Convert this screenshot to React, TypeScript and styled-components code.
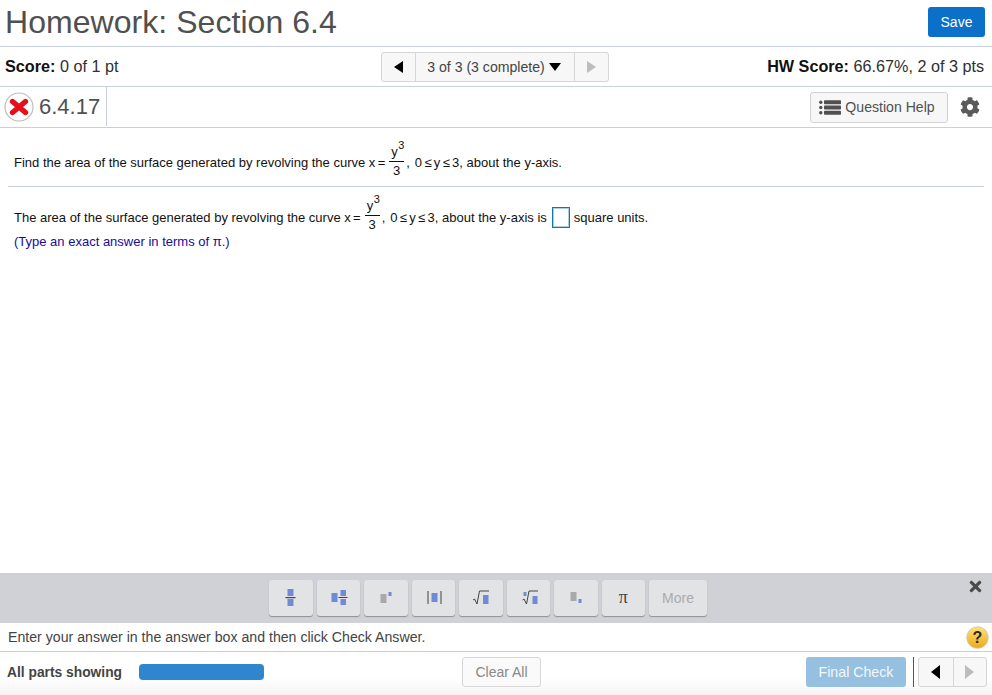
import type React from "react";
import styled, { createGlobalStyle } from "styled-components";
import { FaCog, FaTimes } from "react-icons/fa";

const GlobalStyle = createGlobalStyle`
    html, body {
        margin: 0;
        padding: 0;
        background: #fff;
        font-family: "Liberation Sans", Arial, sans-serif;
    }
    * { box-sizing: border-box; }
`;

const Page = styled.div`
    display: flex;
    flex-direction: column;
    width: 992px;
    height: 695px;
    overflow: hidden;
`;

const TitleBar = styled.header`
    display: flex;
    align-items: flex-start;
    justify-content: space-between;
    height: 47px;
    padding: 7px 7px 0 5px;
    border-bottom: 1px solid #c9cfdf;
`;

const Title = styled.h1`
    margin: -3px 0 0;
    font-size: 32px;
    line-height: 36px;
    font-weight: 400;
    color: #505050;
    letter-spacing: 0.05px;
`;

const SaveButton = styled.button`
    width: 57px;
    height: 30px;
    padding: 0;
    border: 0;
    border-radius: 3px;
    background: #0a70c8;
    color: #fff;
    font: 14px "Liberation Sans", Arial, sans-serif;
`;

const ScoreRow = styled.div`
    display: grid;
    grid-template-columns: 1fr auto 1fr;
    align-items: center;
    height: 40px;
    padding: 0 8px 0 5px;
    border-bottom: 1px solid #c9cfdf;
    font-size: 16.2px;
    color: #303030;
`;

const ScoreText = styled.div<{ $right?: boolean }>`
    text-align: ${(p) => (p.$right ? "right" : "left")};
    b { color: #111; }
`;

const ButtonGroup = styled.div<{ $width: number; $height: number }>`
    display: flex;
    width: ${(p) => p.$width}px;
    height: ${(p) => p.$height}px;
    border: 1px solid #d6d6d6;
    border-radius: 3px;
    background: #f7f7f7;
`;

const GroupCell = styled.div<{ $grow?: boolean; $split?: boolean }>`
    display: flex;
    align-items: center;
    justify-content: center;
    gap: 4px;
    flex: ${(p) => (p.$grow ? "1" : "0 0 auto")};
    width: ${(p) => (p.$grow ? "auto" : "33.5px")};
    padding-right: ${(p) => (p.$grow ? "2px" : "0")};
    border-left: ${(p) => (p.$split ? "1px solid #d6d6d6" : "0")};
    font-size: 14.1px;
    color: #444;
`;

const Triangle = styled.span<{ $dir: "left" | "right" | "down"; $muted?: boolean; $big?: boolean }>`
    display: block;
    width: 0;
    height: 0;
    ${(p) => {
        const c = p.$muted ? "#bdbdbd" : "#000";
        const h = p.$big ? 7 : 6;
        if (p.$dir === "down") return `border-left: 6.5px solid transparent; border-right: 6.5px solid transparent; border-top: 8px solid ${c};`;
        if (p.$dir === "left") return `border-top: ${h}px solid transparent; border-bottom: ${h}px solid transparent; border-right: 9px solid ${c};`;
        return `border-top: ${h}px solid transparent; border-bottom: ${h}px solid transparent; border-left: 9px solid ${c};`;
    }}
`;

const QuestionRow = styled.div`
    display: flex;
    align-items: stretch;
    justify-content: space-between;
    height: 41px;
    padding-right: 12px;
    border-bottom: 1px solid #c9cfdf;
`;

const QuestionId = styled.div`
    display: flex;
    align-items: center;
    gap: 5px;
    width: 107px;
    margin-bottom: 1px;
    padding-left: 4px;
    border-right: 1px solid #c9cfdf;
    font-size: 22px;
    color: #505050;
`;

const Tools = styled.div`
    display: flex;
    align-items: center;
    gap: 12px;
    color: #5a5a5a;
`;

const HelpButton = styled.button`
    display: flex;
    align-items: center;
    justify-content: center;
    gap: 4px;
    width: 138px;
    height: 31px;
    padding: 0 4px 0 0;
    border: 1px solid #d2d2d2;
    border-radius: 3px;
    background: #f7f7f7;
    color: #505050;
    font: 14.1px "Liberation Sans", Arial, sans-serif;
`;

const Content = styled.main`
    flex: 1;
    padding: 0 8px;
    font-size: 13px;
    color: #111;
`;

const Prompt = styled.div`
    display: flex;
    align-items: center;
    height: 59px;
    padding: 11px 0 0 6px;
    border-bottom: 1px solid #c9cfdf;
    white-space: pre;
`;

const AnswerLine = styled(Prompt)`
    height: 47px;
    padding-top: 13px;
    border-bottom: 0;
`;

const MathRun = styled.span<{ $inset?: boolean }>`
    margin-left: ${(p) => (p.$inset ? "1.4px" : "0")};
    word-spacing: -1.3px;
`;

const Fraction = styled.span`
    display: inline-flex;
    flex-direction: column;
    align-items: center;
    width: 15px;
    margin: 0 2px 0 4px;
`;

const Numerator = styled.span`
    position: relative;
    width: 100%;
    padding: 0 0 6px 2px;
    border-bottom: 1px solid #111;
    line-height: 6px;
    sup {
        position: absolute;
        top: -10px;
        left: 9px;
        font-size: 11px;
        line-height: 12px;
    }
`;

const Denominator = styled.span`
    padding-top: 2px;
    line-height: 13px;
`;

const AnswerBox = styled.span`
    display: inline-block;
    width: 18px;
    height: 21px;
    margin: 0 4px 0 5px;
    border: 1px solid #0a7ca8;
    box-shadow: inset 0 0 0 1px rgba(10, 124, 168, 0.35);
`;

const Hint = styled.div`
    padding-left: 6px;
    color: #1a0a96;
`;

const Palette = styled.div`
    position: relative;
    display: flex;
    justify-content: center;
    gap: 4px;
    height: 50px;
    padding: 7px 16px 0 0;
    background: #d0d1d6;
`;

const PaletteKey = styled.div<{ $width?: number }>`
    display: flex;
    align-items: center;
    justify-content: center;
    width: ${(p) => p.$width ?? 43.5}px;
    height: 36px;
    border-radius: 3px;
    background: #e2e3e5;
    box-shadow: 0 1px 1px #8f8f8f;
    color: #a9abae;
    font-size: 14px;
`;

const PiGlyph = styled.span`
    margin-top: -2px;
    font: 18px "Liberation Serif", serif;
    color: #444;
`;

const CloseIcon = styled(FaTimes)`
    position: absolute;
    top: 5px;
    right: 8px;
    color: #4a4a4a;
`;

const InstructionRow = styled.div`
    display: flex;
    align-items: center;
    justify-content: space-between;
    height: 29px;
    padding: 0 3px 0 8px;
    border-bottom: 1px solid #c9cfdf;
    font-size: 14.15px;
    color: #444;
`;

const Footer = styled.footer`
    display: flex;
    align-items: center;
    height: 43px;
    padding: 0 5px 4px 7px;
    background: linear-gradient(#fff 60%, #f4f4f4);
`;

const PartsLabel = styled.b`
    width: 132px;
    margin-top: 1px;
    font-size: 13.8px;
    color: #444;
`;

const ProgressBar = styled.div`
    width: 125px;
    height: 16px;
    border-radius: 4px;
    background: #2e86cf;
`;

const ClearButton = styled.button`
    width: 79px;
    height: 30px;
    margin-left: 198px;
    padding: 0;
    border: 1px solid #d6d6d6;
    border-radius: 3px;
    background: #fafafa;
    color: #888;
    font: 14px "Liberation Sans", Arial, sans-serif;
`;

const FinalButton = styled.button`
    width: 100px;
    height: 30px;
    margin-left: auto;
    padding: 0;
    border: 0;
    border-radius: 3px;
    background: #96c0df;
    color: #f2f7fb;
    font: 14.2px "Liberation Sans", Arial, sans-serif;
`;

const Divider = styled.span`
    width: 1px;
    height: 30px;
    margin: 0 4px 0 7px;
    background: #555;
`;

const FailIcon = () => (
    <svg width="30" height="30" viewBox="0 0 30 30">
        <circle cx="15" cy="15" r="14" fill="#fff" stroke="#bdbdbd" strokeWidth="1.2" />
        <path d="M8.5 9.5 L21.5 20.5 M21.5 9.5 L8.5 20.5" stroke="#e3101c" strokeWidth="5.4" strokeLinecap="round" />
    </svg>
);

const ListIcon = () => (
    <svg width="22" height="15" viewBox="0 0 22 15" fill="#505050">
        <circle cx="1.8" cy="2.2" r="1.7" />
        <circle cx="1.8" cy="7.5" r="1.7" />
        <circle cx="1.8" cy="12.8" r="1.7" />
        <rect x="5" y="0.3" width="17" height="4" rx="0.8" />
        <rect x="5" y="5.5" width="17" height="4" rx="0.8" />
        <rect x="5" y="10.7" width="17" height="4" rx="0.8" />
    </svg>
);

const HelpBadge = () => (
    <svg width="23" height="23" viewBox="0 0 23 23">
        <defs>
            <linearGradient id="gold" x1="0" y1="0" x2="0" y2="1">
                <stop offset="0" stopColor="#fbe27a" />
                <stop offset="1" stopColor="#f0a818" />
            </linearGradient>
        </defs>
        <circle cx="11.5" cy="11.5" r="10.8" fill="url(#gold)" stroke="#c8c8c8" strokeWidth="0.8" />
        <text x="11.5" y="17" textAnchor="middle" fontSize="16" fontWeight="700" fontFamily="Liberation Sans" fill="#2a2a2a">?</text>
    </svg>
);

const MathKey = ({ children }: { children: React.ReactNode }) => (
    <PaletteKey>
        <svg width="26" height="24" viewBox="0 0 26 24">{children}</svg>
    </PaletteKey>
);

const B = "#6f8bd8";
const G = "#a9a9a9";
const L = "#444";

const CurveFraction = () => (
    <Fraction>
        <Numerator>
            y<sup>3</sup>
        </Numerator>
        <Denominator>3</Denominator>
    </Fraction>
);

export default function App() {
    return (
        <Page>
            <GlobalStyle />
            <TitleBar>
                <Title>Homework: Section 6.4</Title>
                <SaveButton>Save</SaveButton>
            </TitleBar>
            <ScoreRow>
                <ScoreText>
                    <b>Score:</b> 0 of 1 pt
                </ScoreText>
                <ButtonGroup $width={228} $height={30}>
                    <GroupCell>
                        <Triangle $dir="left" />
                    </GroupCell>
                    <GroupCell $grow $split>
                        3 of 3 (3 complete)
                        <Triangle $dir="down" />
                    </GroupCell>
                    <GroupCell $split>
                        <Triangle $dir="right" $muted />
                    </GroupCell>
                </ButtonGroup>
                <ScoreText $right>
                    <b>HW Score:</b> 66.67%, 2 of 3 pts
                </ScoreText>
            </ScoreRow>
            <QuestionRow>
                <QuestionId>
                    <FailIcon />
                    6.4.17
                </QuestionId>
                <Tools>
                    <HelpButton>
                        <ListIcon />
                        Question Help
                    </HelpButton>
                    <FaCog size={20} />
                </Tools>
            </QuestionRow>
            <Content>
                <Prompt>
                    Find the area of the surface generated by revolving the curve <MathRun>x =</MathRun>
                    <CurveFraction />, <MathRun $inset>0 ≤ y ≤ 3</MathRun>, about the y-axis.
                </Prompt>
                <AnswerLine>
                    The area of the surface generated by revolving the curve <MathRun>x =</MathRun>
                    <CurveFraction />, <MathRun $inset>0 ≤ y ≤ 3</MathRun>, about the y-axis is
                    <AnswerBox />
                    square units.
                </AnswerLine>
                <Hint>(Type an exact answer in terms of π.)</Hint>
            </Content>
            <Palette>
                <MathKey>
                    <rect x="9.5" y="3" width="6" height="7" fill={B} />
                    <rect x="7.5" y="11" width="10" height="1.2" fill={L} />
                    <rect x="9.5" y="13" width="6" height="7" fill={B} />
                </MathKey>
                <MathKey>
                    <rect x="6.5" y="7" width="6" height="9" fill={B} />
                    <rect x="15.5" y="4" width="5.5" height="6" fill={B} />
                    <rect x="13.5" y="11" width="9" height="1" fill={L} />
                    <rect x="15.5" y="13" width="5.5" height="6" fill={B} />
                </MathKey>
                <MathKey>
                    <rect x="7.5" y="8" width="6" height="9" fill={G} />
                    <rect x="15.5" y="6" width="3" height="4" fill={B} />
                </MathKey>
                <MathKey>
                    <rect x="7.5" y="5" width="1" height="13" fill={L} />
                    <rect x="11.5" y="7" width="6" height="9" fill={B} />
                    <rect x="20.5" y="5" width="1" height="13" fill={L} />
                </MathKey>
                <MathKey>
                    <path d="M5 14 L6.5 13 L9 18 L11.5 5 H21" fill="none" stroke={L} strokeWidth="1" />
                    <rect x="15" y="9" width="5.5" height="9" fill={B} />
                </MathKey>
                <MathKey>
                    <rect x="8.5" y="6" width="3" height="4" fill={B} />
                    <path d="M7.5 14 L9 13 L11.5 18 L14 5 H23" fill="none" stroke={L} strokeWidth="1" />
                    <rect x="17.5" y="10" width="5" height="8" fill={B} />
                </MathKey>
                <MathKey>
                    <rect x="7.5" y="6" width="6" height="9" fill={G} />
                    <rect x="15.5" y="13" width="3" height="4" fill={B} />
                </MathKey>
                <PaletteKey>
                    <PiGlyph>π</PiGlyph>
                </PaletteKey>
                <PaletteKey $width={58}>More</PaletteKey>
                <CloseIcon size={17} />
            </Palette>
            <InstructionRow>
                Enter your answer in the answer box and then click Check Answer.
                <HelpBadge />
            </InstructionRow>
            <Footer>
                <PartsLabel>All parts showing</PartsLabel>
                <ProgressBar />
                <ClearButton>Clear All</ClearButton>
                <FinalButton>Final Check</FinalButton>
                <Divider />
                <ButtonGroup $width={69} $height={30}>
                    <GroupCell>
                        <Triangle $dir="left" $big />
                    </GroupCell>
                    <GroupCell $split>
                        <Triangle $dir="right" $muted $big />
                    </GroupCell>
                </ButtonGroup>
            </Footer>
        </Page>
    );
}
